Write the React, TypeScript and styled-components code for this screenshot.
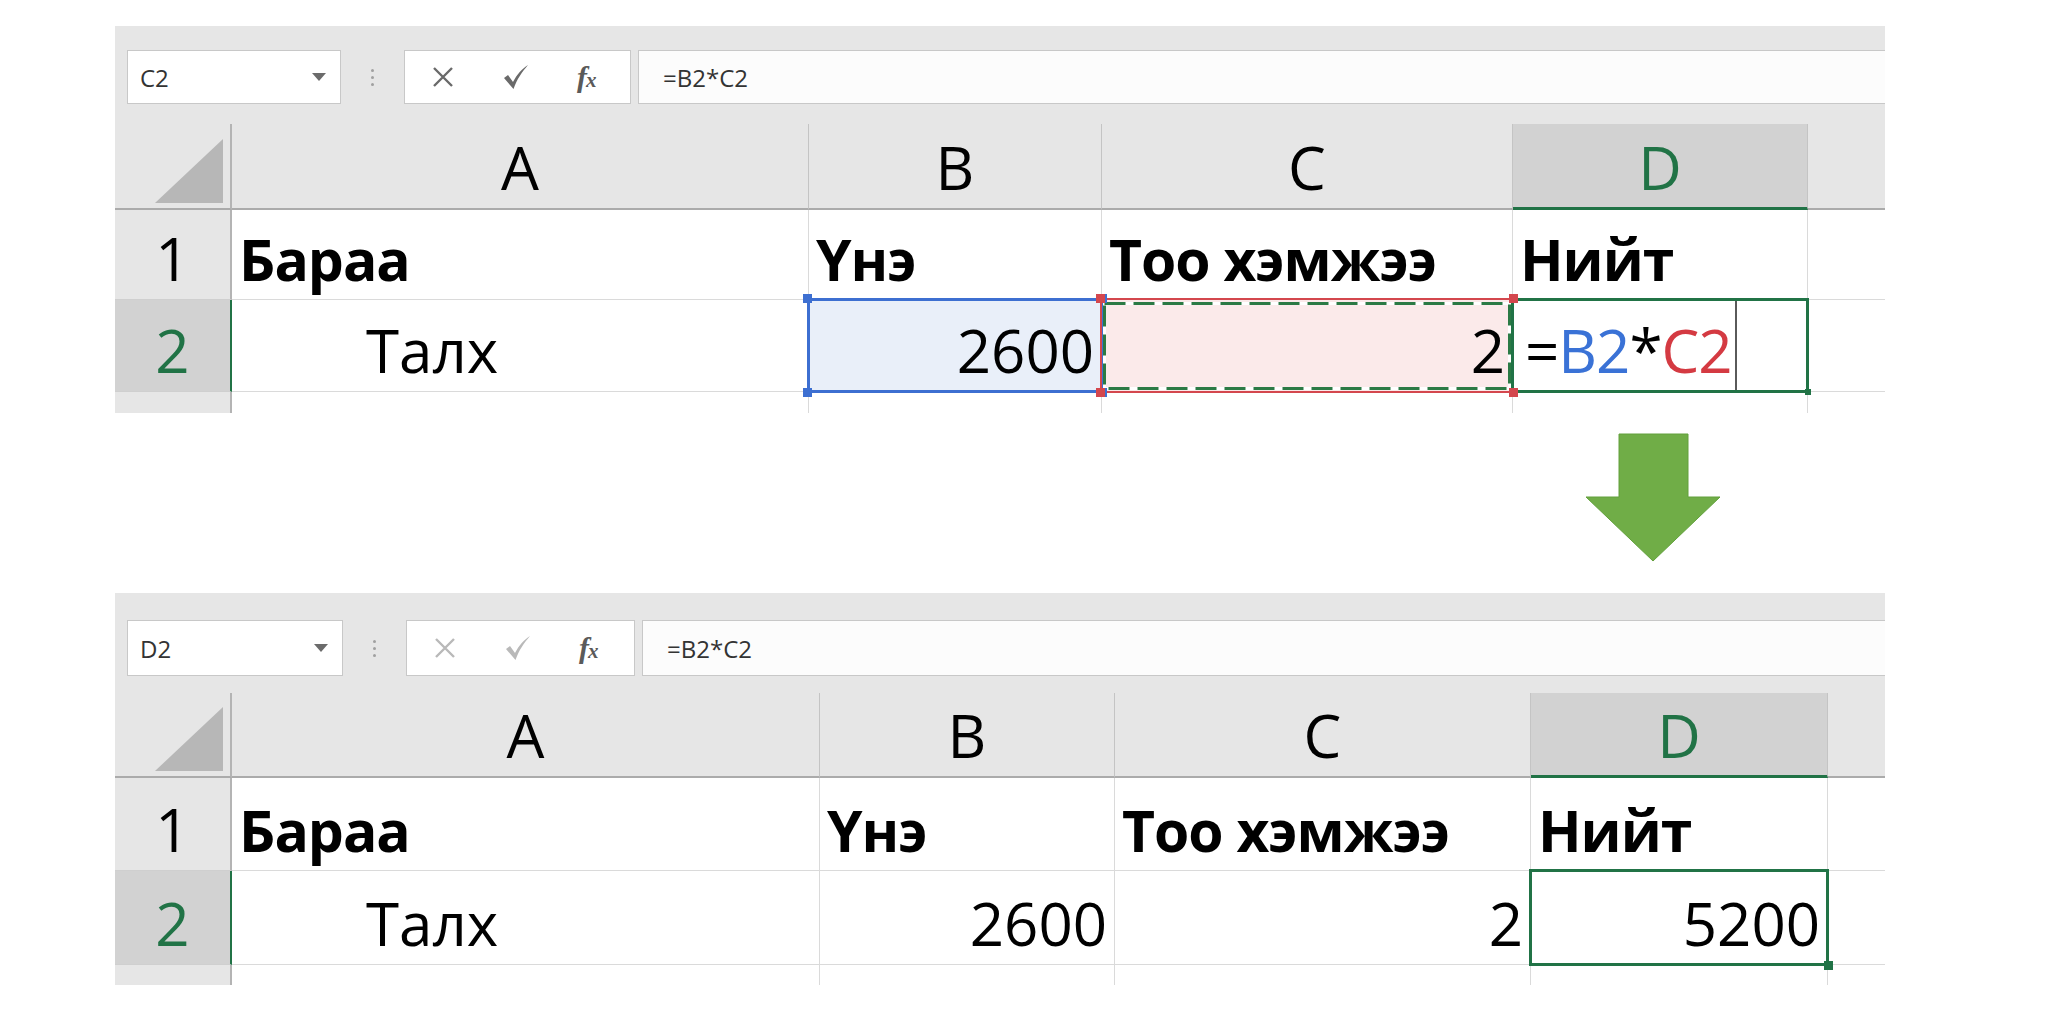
import React from "react";
import styled, { createGlobalStyle } from "styled-components";

const Global = createGlobalStyle`
  html, body { margin: 0; padding: 0; background: #ffffff; }
  body { font-family: "Open Sans", "Liberation Sans", sans-serif; }
  * { box-sizing: border-box; }
`;

const Page = styled.div`
  width: 2048px;
  height: 1029px;
  padding: 26px 0 0 115px;
  display: flex;
  flex-direction: column;
`;

const SheetWrap = styled.div`
  width: 1770px;
  background: #e6e6e6;
  display: flex;
  flex-direction: column;
`;

const Toolbar = styled.div<{ $padTop: number; $boxH: number; $gap: number }>`
  display: flex;
  align-items: stretch;
  height: ${(p) => p.$padTop + p.$boxH + p.$gap}px;
  padding: ${(p) => p.$padTop}px 0 ${(p) => p.$gap}px 12px;
`;

const NameBox = styled.div<{ $w: number }>`
  width: ${(p) => p.$w}px;
  background: #ffffff;
  border: 1px solid #c8c8c8;
  display: flex;
  align-items: center;
  justify-content: space-between;
  padding: 0 14px 0 12px;
  font-size: 24px;
  color: #333333;
`;

const DropArrow = styled.span`
  width: 0;
  height: 0;
  border-left: 7px solid transparent;
  border-right: 7px solid transparent;
  border-top: 8px solid #6b6b6b;
`;

const Dots = styled.div`
  width: 63px;
  display: flex;
  flex-direction: column;
  align-items: center;
  justify-content: center;
  gap: 4px;
`;

const Dot = styled.span`
  width: 3px;
  height: 3px;
  border-radius: 50%;
  background: #a0a0a0;
`;

const ButtonsBox = styled.div<{ $w: number }>`
  width: ${(p) => p.$w}px;
  background: #ffffff;
  border: 1px solid #c8c8c8;
  display: flex;
  align-items: center;
  padding-left: 26px;
  gap: 47px;
`;

const Fx = styled.span`
  font-family: "Liberation Serif", "DejaVu Serif", serif;
  font-style: italic;
  font-weight: 700;
  font-size: 30px;
  color: #5a5a5a;
  line-height: 1;
  letter-spacing: -1px;
  & > small {
    font-size: 21px;
  }
`;

const FormulaBox = styled.div<{ $ml: number }>`
  flex: 1;
  margin-left: ${(p) => p.$ml}px;
  background: #fcfcfc;
  border: 1px solid #c8c8c8;
  border-right: none;
  display: flex;
  align-items: center;
  padding-left: 24px;
  font-size: 24px;
  color: #333333;
`;

const Grid = styled.div<{ $cols: number[]; $rows: number[] }>`
  display: grid;
  grid-template-columns: ${(p) => p.$cols.map((c) => `${c}px`).join(" ")};
  grid-template-rows: ${(p) => p.$rows.map((r) => `${r}px`).join(" ")};
`;

const Corner = styled.div`
  background: #e6e6e6;
  border-right: 2px solid #b4b4b4;
  border-bottom: 2px solid #ababab;
  display: flex;
  align-items: flex-end;
  justify-content: flex-end;
  padding: 0 7px 5px 0;
`;

const Triangle = styled.span`
  width: 0;
  height: 0;
  border-left: 68px solid transparent;
  border-bottom: 64px solid #b7b7b7;
`;

const ColHead = styled.div<{ $sel?: boolean; $last?: boolean }>`
  background: ${(p) => (p.$sel ? "#d2d2d2" : "#e6e6e6")};
  border-right: ${(p) => (p.$last ? "none" : "1px solid #c4c4c4")};
  border-bottom: ${(p) => (p.$sel ? "3px solid #217346" : "2px solid #ababab")};
  display: flex;
  align-items: flex-end;
  justify-content: center;
  padding-bottom: ${(p) => (p.$sel ? 10 : 11)}px;
  font-size: 60px;
  line-height: 1;
  color: ${(p) => (p.$sel ? "#217346" : "#000000")};
`;

const RowHead = styled.div<{ $sel?: boolean; $strip?: boolean }>`
  background: ${(p) => (p.$sel ? "#d2d2d2" : "#e6e6e6")};
  border-right: ${(p) => (p.$sel ? "2px solid #217346" : "2px solid #b4b4b4")};
  border-bottom: ${(p) => (p.$strip ? "none" : "1px solid #cfcfcf")};
  display: flex;
  align-items: flex-end;
  justify-content: center;
  padding-bottom: 11px;
  font-size: 60px;
  line-height: 1;
  color: ${(p) => (p.$sel ? "#217346" : "#000000")};
`;

const Cell = styled.div<{
  $align?: "left" | "right";
  $bold?: boolean;
  $indent?: number;
  $bg?: string;
  $last?: boolean;
  $strip?: boolean;
}>`
  position: relative;
  background: ${(p) => p.$bg || "#ffffff"};
  border-right: ${(p) => (p.$last ? "none" : "1px solid #dadada")};
  border-bottom: ${(p) => (p.$strip ? "none" : "1px solid #dadada")};
  display: flex;
  align-items: flex-end;
  justify-content: ${(p) => (p.$align === "right" ? "flex-end" : "flex-start")};
  padding: 0 7px 11px ${(p) => p.$indent ?? 7}px;
  font-size: ${(p) => (p.$bold ? 57 : 60)}px;
  font-weight: ${(p) => (p.$bold ? 700 : 400)};
  letter-spacing: ${(p) => (p.$bold ? "-1px" : "0")};
  line-height: 1;
  color: #000000;
  white-space: nowrap;
`;

const RangeBox = styled.div<{ $color: string; $w: number }>`
  position: absolute;
  z-index: 2;
  top: -2px;
  left: -2px;
  right: -2px;
  bottom: -2px;
  border: ${(p) => p.$w}px solid ${(p) => p.$color};
  pointer-events: none;
`;

const Handle = styled.span<{ $color: string; $size: number; $v: "top" | "bottom"; $h: "left" | "right" }>`
  position: absolute;
  z-index: 3;
  width: ${(p) => p.$size}px;
  height: ${(p) => p.$size}px;
  background: ${(p) => p.$color};
  ${(p) => p.$v}: -${(p) => Math.round(p.$size / 2) + 1}px;
  ${(p) => p.$h}: -${(p) => Math.round(p.$size / 2) + 1}px;
`;

const Ants = styled.svg`
  position: absolute;
  z-index: 2;
  top: 2px;
  left: 1px;
  width: calc(100% - 2px);
  height: calc(100% - 3px);
  overflow: visible;
  pointer-events: none;
`;

const FormulaText = styled.span`
  letter-spacing: -1px;
`;

const Ref = styled.span<{ $c: string }>`
  color: ${(p) => p.$c};
`;

const Caret = styled.span`
  align-self: stretch;
  width: 2px;
  margin: 0 0 -11px 3px;
  background: #5a5a5a;
`;

const ArrowRow = styled.div`
  height: 180px;
  padding: 20px 0 0 1470px;
`;

const XIcon = ({ c }: { c: string }) => (
  <svg width="24" height="22" viewBox="0 0 24 22">
    <path d="M3 2 L21 20 M21 2 L3 20" stroke={c} strokeWidth="2.4" fill="none" />
  </svg>
);

const CheckIcon = ({ c }: { c: string }) => (
  <svg width="28" height="26" viewBox="0 0 28 26">
    <path d="M2 14 L6 11 L11 18 C15 10 20 5 26 1 C20 8 15 15 11.5 25 Z" fill={c} />
  </svg>
);

type Spec = {
  name: string;
  padTop: number;
  boxH: number;
  gap: number;
  nameW: number;
  btnW: number;
  fMl: number;
  cols: number[];
  rows: number[];
  editing: boolean;
};

const Sheet = ({ s }: { s: Spec }) => {
  const iconC = s.editing ? "#6a6a6a" : "#b9b9b9";
  return (
    <SheetWrap>
      <Toolbar $padTop={s.padTop} $boxH={s.boxH} $gap={s.gap}>
        <NameBox $w={s.nameW}>
          <span>{s.name}</span>
          <DropArrow />
        </NameBox>
        <Dots>
          <Dot />
          <Dot />
          <Dot />
        </Dots>
        <ButtonsBox $w={s.btnW}>
          <XIcon c={iconC} />
          <CheckIcon c={iconC} />
          <Fx>
            f<small>x</small>
          </Fx>
        </ButtonsBox>
        <FormulaBox $ml={s.fMl}>=B2*C2</FormulaBox>
      </Toolbar>
      <Grid $cols={s.cols} $rows={s.rows}>
        <Corner>
          <Triangle />
        </Corner>
        <ColHead>A</ColHead>
        <ColHead>B</ColHead>
        <ColHead>C</ColHead>
        <ColHead $sel>D</ColHead>
        <ColHead $last />

        <RowHead>1</RowHead>
        <Cell $bold>Бараа</Cell>
        <Cell $bold>Үнэ</Cell>
        <Cell $bold>Тоо хэмжээ</Cell>
        <Cell $bold>Нийт</Cell>
        <Cell $last />

        <RowHead $sel>2</RowHead>
        <Cell $indent={134}>Талх</Cell>
        {s.editing ? (
          <Cell $align="right" $bg="#e9eff9">
            2600
            <RangeBox $color="#3d6fd1" $w={3} />
            <Handle $color="#3d6fd1" $size={9} $v="top" $h="left" />
            <Handle $color="#3d6fd1" $size={9} $v="top" $h="right" />
            <Handle $color="#3d6fd1" $size={9} $v="bottom" $h="left" />
            <Handle $color="#3d6fd1" $size={9} $v="bottom" $h="right" />
          </Cell>
        ) : (
          <Cell $align="right">2600</Cell>
        )}
        {s.editing ? (
          <Cell $align="right" $bg="#fbeaea" $indent={7}>
            2
            <RangeBox $color="#d4474e" $w={2} />
            <Ants preserveAspectRatio="none">
              <rect x="1.5" y="1.5" width="calc(100% - 3px)" height="calc(100% - 3px)" fill="none" stroke="#ffffff" strokeWidth="3" />
              <rect x="1.5" y="1.5" width="calc(100% - 3px)" height="calc(100% - 3px)" fill="none" stroke="#2b7a45" strokeWidth="3" strokeDasharray="21 8" />
            </Ants>
            <Handle $color="#d4474e" $size={9} $v="top" $h="left" />
            <Handle $color="#d4474e" $size={9} $v="top" $h="right" />
            <Handle $color="#d4474e" $size={9} $v="bottom" $h="left" />
            <Handle $color="#d4474e" $size={9} $v="bottom" $h="right" />
          </Cell>
        ) : (
          <Cell $align="right">2</Cell>
        )}
        {s.editing ? (
          <Cell $indent={12}>
            <FormulaText>
              =<Ref $c="#3a72d6">B2</Ref>*<Ref $c="#d43a42">C2</Ref>
            </FormulaText>
            <Caret />
            <RangeBox $color="#217346" $w={3} />
            <Handle $color="#217346" $size={6} $v="bottom" $h="right" />
          </Cell>
        ) : (
          <Cell $align="right">
            5200
            <RangeBox $color="#217346" $w={3} />
            <Handle $color="#217346" $size={9} $v="bottom" $h="right" />
          </Cell>
        )}
        <Cell $last />

        <RowHead $strip />
        <Cell $strip />
        <Cell $strip />
        <Cell $strip />
        <Cell $strip />
        <Cell $strip $last />
      </Grid>
    </SheetWrap>
  );
};

const top: Spec = {
  name: "C2",
  padTop: 24,
  boxH: 54,
  gap: 20,
  nameW: 214,
  btnW: 227,
  fMl: 7,
  cols: [117, 577, 293, 411, 295, 77],
  rows: [86, 90, 92, 21],
  editing: true,
};

const bottom: Spec = {
  name: "D2",
  padTop: 27,
  boxH: 56,
  gap: 17,
  nameW: 216,
  btnW: 229,
  fMl: 7,
  cols: [117, 588, 295, 416, 297, 57],
  rows: [85, 93, 94, 20],
  editing: false,
};

export default function App() {
  return (
    <>
      <Global />
      <Page>
        <Sheet s={top} />
        <ArrowRow>
          <svg width="136" height="129" viewBox="0 0 136 129">
            <polygon
              points="34,1 103,1 103,64 135,64 68,128 1,64 34,64"
              fill="#70ad47"
              stroke="#62a03c"
              strokeWidth="1"
            />
          </svg>
        </ArrowRow>
        <Sheet s={bottom} />
      </Page>
    </>
  );
}
